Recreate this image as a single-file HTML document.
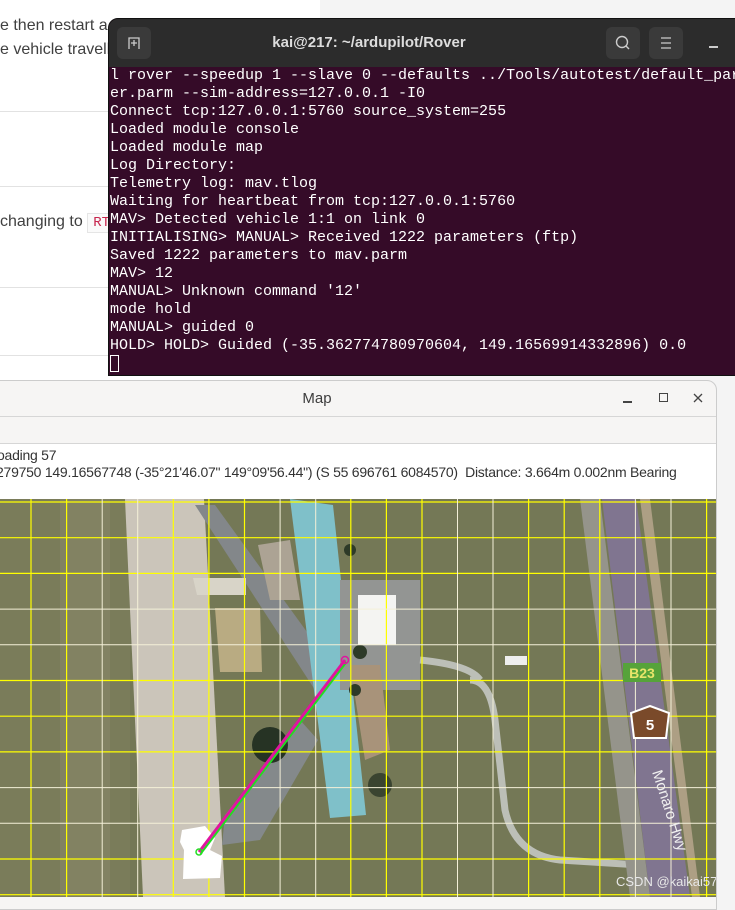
<!DOCTYPE html>
<html><head><meta charset="utf-8"><style>
*{margin:0;padding:0;box-sizing:border-box}
body{width:735px;height:897px;overflow:hidden;position:relative;background:#f4f4f4;font-family:"Liberation Sans",sans-serif}
.page{position:absolute;left:0;top:0;width:320px;height:380px;background:#fff}
.sep{position:absolute;left:0;width:320px;height:1px;background:#e2e2e2}
.ptxt{position:absolute;left:0;font-size:16px;color:#404040;white-space:nowrap}
.term{position:absolute;left:108px;top:18px;width:640px;height:358px;background:#350b28;border-radius:10px 10px 0 0;overflow:hidden;border:1px solid #111}
.tbar{height:48px;background:#2c2c2c;position:relative}
.tbtn{position:absolute;top:8px;width:34px;height:32px;background:#3a3a3a;border-radius:6px}
.ttl{position:absolute;left:0;width:520px;top:15px;text-align:center;color:#ddd;font-weight:bold;font-size:15px}
.tc{position:absolute;left:1px;top:48px;font-family:"Liberation Mono",monospace;font-size:15px;line-height:18px;color:#fff;white-space:pre}
.cur{display:inline-block;width:9px;height:17px;border:1px solid #fff;vertical-align:top}
.map{position:absolute;left:-10px;top:380px;width:727px;height:530px;background:#f6f5f4;border-radius:0 10px 0 0;border:1px solid #ccc;overflow:hidden}
.mt{position:absolute;top:9px;left:0;width:652px;text-align:center;font-size:15px;color:#3d3d3d}
.st{position:absolute;left:0;font-size:14px;letter-spacing:-0.25px;color:#333;white-space:nowrap}
</style></head><body>
<div class="page">
<div class="ptxt" style="top:17px">e then restart a</div>
<div class="ptxt" style="top:41px">e vehicle travelling</div>
<div class="sep" style="top:111px"></div>
<div class="sep" style="top:186px"></div>
<div class="ptxt" style="top:213px">changing to <span style="display:inline-block;border:1px solid #e5e5e5;background:#fafafa;color:#c7254e;font-size:14px;padding:1px 5px;font-family:'Liberation Mono',monospace">RT</span></div>
<div class="sep" style="top:287px"></div>
<div class="sep" style="top:355px"></div>
</div>

<div class="term">
<div class="tbar">
<div class="tbtn" style="left:8px"><svg width="34" height="32"><path d="M12 22V11h10v11M17 13v6M14 16h6" stroke="#ccc" stroke-width="1.3" fill="none"/></svg></div>
<div class="ttl">kai@217: ~/ardupilot/Rover</div>
<div class="tbtn" style="left:497px"><svg width="34" height="32"><circle cx="16" cy="15" r="5.5" stroke="#ccc" stroke-width="1.4" fill="none"/><path d="M20 19l3 3" stroke="#ccc" stroke-width="1.4"/></svg></div>
<div class="tbtn" style="left:540px"><svg width="34" height="32"><path d="M12 11h10M12 16h10M12 21h10" stroke="#ccc" stroke-width="1.3"/></svg></div>
<div style="position:absolute;left:600px;top:27px;width:9px;height:1.5px;background:#ccc"></div>
</div>
<div class="tc">l rover --speedup 1 --slave 0 --defaults ../Tools/autotest/default_par
er.parm --sim-address=127.0.0.1 -I0
Connect tcp:127.0.0.1:5760 source_system=255
Loaded module console
Loaded module map
Log Directory:
Telemetry log: mav.tlog
Waiting for heartbeat from tcp:127.0.0.1:5760
MAV> Detected vehicle 1:1 on link 0
INITIALISING> MANUAL> Received 1222 parameters (ftp)
Saved 1222 parameters to mav.parm
MAV> 12
MANUAL> Unknown command '12'
mode hold
MANUAL> guided 0
HOLD> HOLD> Guided (-35.362774780970604, 149.16569914332896) 0.0
<span class="cur"></span></div>
</div>

<div class="map">
<div class="mt">Map</div>
<div style="position:absolute;left:632px;top:20px;width:9px;height:1.5px;background:#444"></div>
<div style="position:absolute;left:668px;top:12px;width:9px;height:9px;border:1.4px solid #444"></div>
<svg style="position:absolute;left:701px;top:11px" width="12" height="12"><path d="M2 2l8 8M10 2l-8 8" stroke="#444" stroke-width="1.3"/></svg>
<div style="position:absolute;left:0;top:35px;width:100%;height:1px;background:#d6d6d6"></div>
<div style="position:absolute;left:0;top:62px;width:100%;height:1px;background:#d6d6d6;"></div>
<div style="position:absolute;left:0;top:63px;width:100%;height:55px;background:#fff"></div>
<div class="st" style="top:66px;left:6px">oading 57</div>
<div class="st" style="top:83px;left:5px">279750 149.16567748 (-35°21'46.07" 149°09'56.44") (S 55 696761 6084570)&nbsp; Distance: 3.664m 0.002nm Bearing</div>
</div>

<svg style="position:absolute;left:0;top:499px" width="716" height="398" viewBox="0 499 716 398">
<rect x="0" y="499" width="716" height="398" fill="#747856"/>
<rect x="0" y="499" width="130" height="398" fill="#7a7c5a"/>
<rect x="60" y="499" width="50" height="398" fill="#828262"/>
<polygon points="125,499 204,499 225,897 143,897" fill="#cbc5ba"/>
<polygon points="195,505 215,505 320,650 315,690" fill="#83878a"/>
<polygon points="193,578 246,578 246,595 197,595" fill="#d8d4c8"/>
<polygon points="215,608 260,608 262,672 220,672" fill="#b9ab82"/>
<polygon points="290,499 333,505 366,815 330,818" fill="#7fc0c9"/>
<polygon points="258,545 290,540 300,600 270,600" fill="#aca394"/>
<polygon points="300,720 318,740 260,840 222,845 225,815" fill="#84898b"/>
<rect x="340" y="580" width="80" height="110" fill="#939593"/>
<rect x="358" y="595" width="38" height="50" fill="#f4f4f2"/>
<polygon points="350,665 380,665 390,750 365,760" fill="#a8937a"/>
<path d="M470 680 Q490 680 495 720 L505 810 Q515 855 560 860 L640 865" stroke="#bcbfb7" stroke-width="7" fill="none"/>
<path d="M420 660 Q470 665 480 680" stroke="#bcbfb7" stroke-width="7" fill="none"/>
<polygon points="580,499 600,499 650,897 630,897" fill="#95948b"/>
<polygon points="602,499 636,499 690,897 650,897" fill="#807590"/>
<polygon points="640,499 650,499 700,897 692,897" fill="#ad9f84"/>
<rect x="505" y="656" width="22" height="9" fill="#eee"/>
<circle cx="270" cy="745" r="18" fill="#263324"/>
<circle cx="380" cy="785" r="12" fill="#3a4430"/>
<circle cx="360" cy="652" r="7" fill="#2d3a28"/>
<circle cx="355" cy="690" r="6" fill="#2d3a28"/>
<circle cx="350" cy="550" r="6" fill="#2d3a28"/>
<g stroke-width="1.2">
<g stroke="#ffff00">
<line x1="31" y1="499" x2="31" y2="897"/><line x1="66.6" y1="499" x2="66.6" y2="897"/>
<line x1="173.3" y1="499" x2="173.3" y2="897"/><line x1="208.9" y1="499" x2="208.9" y2="897"/><line x1="244.5" y1="499" x2="244.5" y2="897"/>
<line x1="350.8" y1="499" x2="350.8" y2="897"/><line x1="386.4" y1="499" x2="386.4" y2="897"/><line x1="422" y1="499" x2="422" y2="897"/>
<line x1="528.6" y1="499" x2="528.6" y2="897"/><line x1="564.2" y1="499" x2="564.2" y2="897"/><line x1="599.8" y1="499" x2="599.8" y2="897"/>
<line x1="706.6" y1="499" x2="706.6" y2="897"/>
<line x1="0" y1="502" x2="716" y2="502"/><line x1="0" y1="537.7" x2="716" y2="537.7"/><line x1="0" y1="573.4" x2="716" y2="573.4"/>
<line x1="0" y1="680.5" x2="716" y2="680.5"/><line x1="0" y1="716.2" x2="716" y2="716.2"/><line x1="0" y1="751.9" x2="716" y2="751.9"/>
<line x1="0" y1="859" x2="716" y2="859"/><line x1="0" y1="894.7" x2="716" y2="894.7"/>
</g>
<g stroke="#f4f0d8" stroke-width="1">
<line x1="102.2" y1="499" x2="102.2" y2="897"/><line x1="137.7" y1="499" x2="137.7" y2="897"/>
<line x1="280.1" y1="499" x2="280.1" y2="897"/><line x1="315.7" y1="499" x2="315.7" y2="897"/>
<line x1="457.5" y1="499" x2="457.5" y2="897"/><line x1="493" y1="499" x2="493" y2="897"/>
<line x1="635.4" y1="499" x2="635.4" y2="897"/><line x1="671" y1="499" x2="671" y2="897"/>
<line x1="0" y1="609.1" x2="716" y2="609.1"/><line x1="0" y1="644.8" x2="716" y2="644.8"/>
<line x1="0" y1="787.6" x2="716" y2="787.6"/><line x1="0" y1="823.3" x2="716" y2="823.3"/>
</g>
</g>
<path d="M182 830 L205 826 L215 838 L210 850 L222 856 L220 878 L183 879 L184 850 L180 842Z" fill="#fff"/>
<line x1="346.5" y1="662" x2="200.5" y2="854" stroke="#22dd22" stroke-width="2"/>
<line x1="345" y1="660" x2="199" y2="852" stroke="#e014a0" stroke-width="3"/>
<circle cx="345" cy="660" r="3.5" fill="none" stroke="#e014a0" stroke-width="1.5"/>
<circle cx="199" cy="852" r="3" fill="none" stroke="#22dd22" stroke-width="1.5"/>
<rect x="623" y="663" width="38" height="19" fill="#56a33a"/>
<text x="642" y="678" font-family="Liberation Sans" font-size="14" font-weight="bold" fill="#e8e46a" text-anchor="middle">B23</text>
<polygon points="650,706 669,713 666,738 634,738 631,713" fill="#7a4a2a" stroke="#fff" stroke-width="2"/>
<text x="650" y="730" font-family="Liberation Sans" font-size="15" font-weight="bold" fill="#fff" text-anchor="middle">5</text>
<text x="0" y="0" font-family="Liberation Sans" font-size="15" fill="#f0f0f0" transform="translate(652,772) rotate(72)">Monaro Hwy</text>
<text x="616" y="886" font-family="Liberation Sans" font-size="13" fill="#e8e8e8">CSDN @kaikai57</text>
</svg>
</body></html>
